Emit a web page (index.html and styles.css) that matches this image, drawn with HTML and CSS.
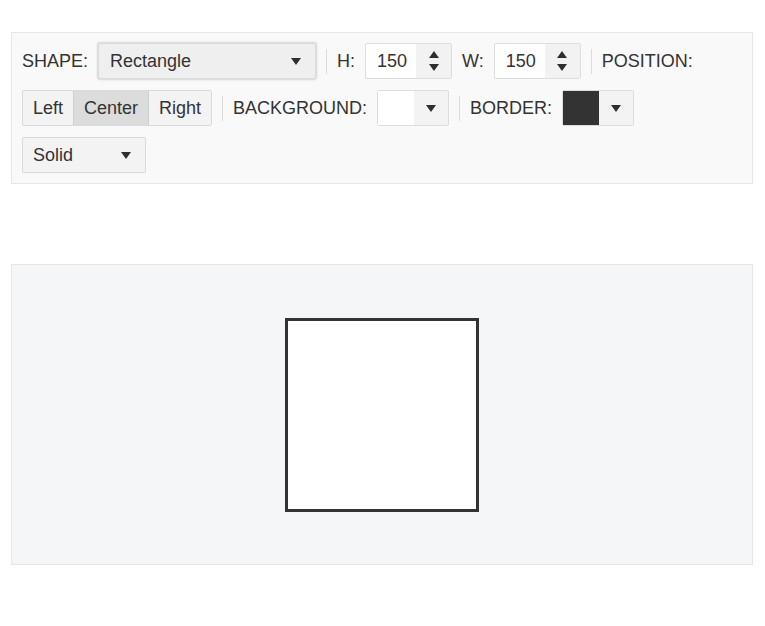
FILE: index.html
```html
<!DOCTYPE html>
<html>
<head>
<meta charset="utf-8">
<link rel="stylesheet" href="styles.css">
</head>
<body>
<div class="page">
  <div class="toolbar">
    <span class="label">SHAPE:</span>
    <div class="dropdown shape-dd focused">
      <span class="dd-text">Rectangle</span>
      <span class="caret"></span>
    </div>
    <span class="sep"></span>
    <span class="label">H:</span>
    <div class="numeric">
      <span class="num-val">150</span>
      <span class="spin"><span class="up"></span><span class="down"></span></span>
    </div>
    <span class="label">W:</span>
    <div class="numeric">
      <span class="num-val">150</span>
      <span class="spin"><span class="up"></span><span class="down"></span></span>
    </div>
    <span class="sep"></span>
    <span class="label">POSITION:</span>

    <div class="btn-group">
      <span class="btn">Left</span>
      <span class="btn active">Center</span>
      <span class="btn">Right</span>
    </div>
    <span class="sep"></span>
    <span class="label">BACKGROUND:</span>
    <div class="picker">
      <span class="swatch swatch-white"></span>
      <span class="picker-arrow"><span class="caret"></span></span>
    </div>
    <span class="sep"></span>
    <span class="label">BORDER:</span>
    <div class="picker">
      <span class="swatch swatch-dark"></span>
      <span class="picker-arrow"><span class="caret"></span></span>
    </div>

    <div class="dropdown solid-dd">
      <span class="dd-text">Solid</span>
      <span class="caret"></span>
    </div>
  </div>

  <div class="canvas">
    <div class="shape"></div>
  </div>
</div>
</body>
</html>
```
FILE: styles.css
```css
html, body {
  margin: 0;
  padding: 0;
  background: #ffffff;
}

body {
  font-family: "Liberation Sans", Arial, sans-serif;
  font-size: 18px;
  color: #333333;
}

.page {
  padding: 32px 12px 0 11px;
}

.toolbar {
  display: flex;
  flex-wrap: wrap;
  align-items: center;
  column-gap: 10px;
  row-gap: 11px;
  padding: 10px;
  background: #f9f9f9;
  border: 1px solid #e6e6e6;
}

.label {
  line-height: 36px;
  color: #333;
}

.sep {
  width: 1px;
  height: 25px;
  background: #dcdcdc;
}

.dropdown {
  box-sizing: border-box;
  height: 36px;
  display: flex;
  align-items: center;
  justify-content: space-between;
  background: #f3f3f3;
  border: 1px solid #dadada;
  border-radius: 2px;
  padding: 0 14px 0 11px;
}

.shape-dd {
  width: 218px;
}

.focused {
  box-shadow: 0 0 2px 1px rgba(0, 0, 0, 0.14);
  background: #efefef;
}

.solid-dd {
  width: 124px;
  padding-left: 10px;
}

.caret {
  width: 0;
  height: 0;
  border-left: 5px solid transparent;
  border-right: 5px solid transparent;
  border-top: 7px solid #2e2e2e;
}

.numeric {
  box-sizing: border-box;
  width: 87px;
  height: 36px;
  display: flex;
  border: 1px solid #dddddd;
  border-radius: 2px;
  background: #ffffff;
}

.num-val {
  flex: 1;
  line-height: 34px;
  padding-left: 11px;
}

.spin {
  width: 35px;
  background: #f2f2f2;
  display: flex;
  flex-direction: column;
  align-items: center;
  justify-content: center;
  gap: 6px;
}

.up {
  width: 0;
  height: 0;
  border-left: 5px solid transparent;
  border-right: 5px solid transparent;
  border-bottom: 7px solid #2e2e2e;
}

.down {
  width: 0;
  height: 0;
  border-left: 5px solid transparent;
  border-right: 5px solid transparent;
  border-top: 7px solid #2e2e2e;
}

.btn-group {
  display: flex;
  height: 36px;
  border: 1px solid #dadada;
  border-radius: 2px;
  box-sizing: border-box;
  background: #f3f3f3;
}

.btn {
  padding: 0 10px;
  line-height: 34px;
  border-left: 1px solid #dadada;
}

.btn:first-child {
  border-left: none;
}

.btn.active {
  background: #dcdcdc;
  border-color: #cfcfcf;
  border-right: 1px solid #cfcfcf;
}

.btn.active + .btn {
  border-left: none;
}

.picker {
  box-sizing: border-box;
  width: 72px;
  height: 36px;
  display: flex;
  border: 1px solid #dddddd;
  border-radius: 2px;
  background: #f3f3f3;
}

.swatch {
  width: 36px;
}

.swatch-white {
  background: #ffffff;
}

.swatch-dark {
  background: #333333;
}

.picker-arrow {
  flex: 1;
  display: flex;
  align-items: center;
  justify-content: center;
}

.canvas {
  margin-top: 80px;
  height: 299px;
  background: #f5f6f8;
  border: 1px solid #e3e6ea;
  display: flex;
  align-items: center;
  justify-content: center;
}

.shape {
  box-sizing: border-box;
  width: 194px;
  height: 194px;
  background: #ffffff;
  border: 3px solid #333333;
}
```
